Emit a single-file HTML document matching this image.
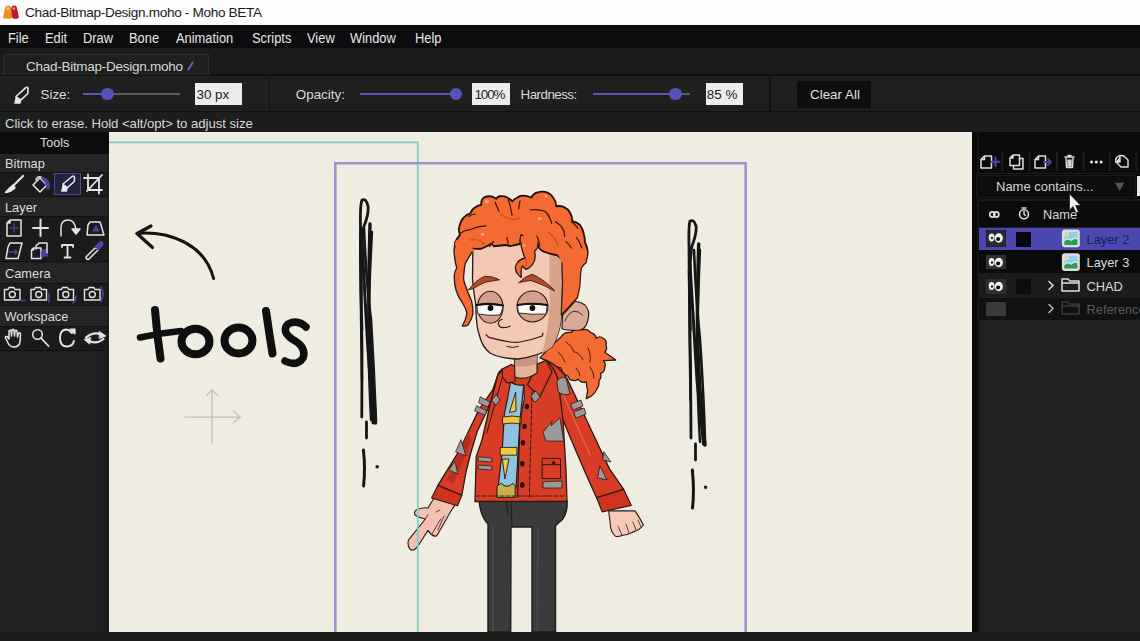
<!DOCTYPE html>
<html><head><meta charset="utf-8">
<style>
*{margin:0;padding:0;box-sizing:border-box}
html,body{width:1140px;height:641px;overflow:hidden;background:#1c1c1b;font-family:"Liberation Sans",sans-serif}
.a{position:absolute}
.t{position:absolute;white-space:nowrap;line-height:1}
#title{left:0;top:0;width:1140px;height:25px;background:#fcfcfc}
#menu{left:0;top:25px;width:1140px;height:23px;background:#0c0c0e}
#tabbar{left:0;top:48px;width:1140px;height:27px;background:#1b1b1b}
#tools{left:0;top:75px;width:1140px;height:37px;background:#1f1f1f;border-top:1px solid #121212}
#status{left:0;top:111px;width:1140px;height:21px;background:#1d1d1d;border-top:1px solid #111}
#lp{left:0;top:132px;width:109px;height:500px;background:#202021}
#canvas{left:109px;top:132px;width:863px;height:500px;background:#efece2;overflow:hidden}
#rp{left:972px;top:132px;width:168px;height:500px;background:#202020}
#bot{left:0;top:632px;width:1140px;height:9px;background:#1c1c1a}
.mi{color:#e6e6e6;font-size:14px;transform:scaleX(0.92);transform-origin:0 0}
.lt{color:#dcdcdc;font-size:13px}
</style></head><body>
<div id="title" class="a">
  <svg class="a" style="left:0;top:0" width="24" height="24" viewBox="0 0 24 24">
    <path d="M4.8 9 Q5.3 5.6 8 5.6 Q10.6 5.6 11.2 9 L12 17 Q12 18.8 10 18.8 L5 18.8 Q3 18.8 3.2 16.8 Z" fill="#f0901c"/>
    <path d="M11 9 Q11.5 5.6 14.2 5.6 Q16.8 5.6 17.2 9 L18.8 16.8 Q18.9 18.8 16.8 18.8 L14 18.8 Q12.2 18.8 12 17 Z" fill="#b81c2c"/>
    <circle cx="7.8" cy="8.6" r="1.3" fill="#f8c070"/>
    <circle cx="13.8" cy="8.6" r="1.3" fill="#f090a0"/>
  </svg>
  <div class="t" style="left:25px;top:5.5px;font-size:13.6px;letter-spacing:-0.33px;color:#1b1b1b">Chad-Bitmap-Design.moho - Moho BETA</div>
</div>
<div id="menu" class="a">
  <div class="t mi" style="left:8px;top:5.5px">File</div>
  <div class="t mi" style="left:45px;top:5.5px">Edit</div>
  <div class="t mi" style="left:83px;top:5.5px">Draw</div>
  <div class="t mi" style="left:129px;top:5.5px">Bone</div>
  <div class="t mi" style="left:176px;top:5.5px">Animation</div>
  <div class="t mi" style="left:252px;top:5.5px">Scripts</div>
  <div class="t mi" style="left:307px;top:5.5px">View</div>
  <div class="t mi" style="left:350px;top:5.5px">Window</div>
  <div class="t mi" style="left:415px;top:5.5px">Help</div>
</div>
<div id="tabbar" class="a">
  <div class="a" style="left:3px;top:6px;width:206px;height:21px;background:#1f1f1f;border:1px solid #2c2c2c;border-bottom:none"></div>
  <div class="a" style="left:209px;top:26px;width:931px;height:1px;background:#101010"></div>
  <div class="t" style="left:26px;top:11.5px;font-size:13.5px;letter-spacing:-0.27px;color:#d8d8d8">Chad-Bitmap-Design.moho</div>
  <svg class="a" style="left:186px;top:13px" width="9" height="10"><path d="M2 9 L7 1" stroke="#6a62c8" stroke-width="2"/></svg>
</div>
<div id="tools" class="a">
  <svg class="a" style="left:0;top:0" width="40" height="37" viewBox="0 75 40 37">
    <path d="M16 95.5 L25.5 86.8 Q27.5 85.3 28 87.5 L27.8 92.5 L21 98.8" fill="none" stroke="#e6e6e6" stroke-width="1.6" stroke-linejoin="round" stroke-linecap="round"/>
    <path d="M15.8 94.8 L21.5 98.5 L20.5 102.8 L14.2 102.8 Z" fill="#e6e6e6"/>
  </svg>
  <div class="t" style="left:40.5px;top:12px;font-size:13.4px;color:#dadada">Size:</div>
  <div class="a" style="left:83px;top:17px;width:24px;height:2px;background:#5a55b8"></div>
  <div class="a" style="left:107px;top:17px;width:73px;height:2px;background:#5c5c5c"></div>
  <div class="a" style="left:101px;top:11.5px;width:12.5px;height:12.5px;border-radius:50%;background:#5652b8"></div>
  <div class="a" style="left:195px;top:7px;width:47px;height:21.5px;background:#ececec"></div>
  <div class="t" style="left:196.5px;top:12px;font-size:13.4px;color:#222">30 px</div>
  <div class="a" style="left:268.6px;top:1px;width:1.5px;height:35px;background:#121212"></div>
  <div class="t" style="left:295.8px;top:12px;font-size:13.4px;color:#dadada">Opacity:</div>
  <div class="a" style="left:360px;top:17px;width:96px;height:2px;background:#5a55b8"></div>
  <div class="a" style="left:449.5px;top:11.5px;width:12.6px;height:12.6px;border-radius:50%;background:#5652b8"></div>
  <div class="a" style="left:472px;top:7.3px;width:37.6px;height:21.3px;background:#ececec"></div>
  <div class="t" style="left:474.5px;top:12px;font-size:13.4px;letter-spacing:-1.1px;color:#222">100%</div>
  <div class="t" style="left:520.6px;top:12px;font-size:13.4px;letter-spacing:-0.55px;color:#dadada">Hardness:</div>
  <div class="a" style="left:593px;top:17px;width:83px;height:2px;background:#5a55b8"></div>
  <div class="a" style="left:676px;top:17px;width:14px;height:2px;background:#5c5c5c"></div>
  <div class="a" style="left:669.4px;top:11.5px;width:12.6px;height:12.6px;border-radius:50%;background:#5652b8"></div>
  <div class="a" style="left:705.8px;top:7.3px;width:36.8px;height:21.3px;background:#ececec"></div>
  <div class="t" style="left:706.8px;top:12px;font-size:13.4px;color:#222">85 %</div>
  <div class="a" style="left:769px;top:1px;width:1.5px;height:35px;background:#121212"></div>
  <div class="a" style="left:797px;top:4.7px;width:73.5px;height:27.3px;background:#0e0e0e"></div>
  <div class="t" style="left:810px;top:12px;font-size:13.4px;color:#e0e0e0">Clear All</div>
</div>
<div id="status" class="a">
  <div class="t" style="left:5px;top:5px;font-size:13.2px;letter-spacing:-0.05px;color:#d8d8d8">Click to erase. Hold &lt;alt/opt&gt; to adjust size</div>
</div>
<div id="lp" class="a">
  <div class="a" style="left:0;top:0;width:109px;height:21.5px;background:#0c0c0c"></div>
  <div class="t" style="left:40px;top:5px;font-size:12.5px;color:#e0e0d8">Tools</div>
  <div class="a" style="left:0;top:21.5px;width:108px;height:18.5px;background:#252525"></div>
  <div class="t" style="left:5px;top:26.3px;font-size:12.8px;color:#dcdcdc">Bitmap</div>
  <div class="a" style="left:0;top:40px;width:108px;height:24.5px;background:#1b1b1b;border-top:1px solid #111;border-bottom:1px solid #111"></div>
  <div class="a" style="left:54px;top:41.3px;width:27px;height:22.2px;background:#23233a;border:1px solid #4a46a8"></div>
  <div class="a" style="left:0;top:64.5px;width:108px;height:19px;background:#252525"></div>
  <div class="t" style="left:5px;top:69.6px;font-size:12.8px;color:#dcdcdc">Layer</div>
  <div class="a" style="left:0;top:84px;width:108px;height:46px;background:#1b1b1b;border-top:1px solid #111;border-bottom:1px solid #111"></div>
  <div class="a" style="left:0;top:130.5px;width:108px;height:20.5px;background:#252525"></div>
  <div class="t" style="left:5px;top:136.3px;font-size:12.8px;color:#dcdcdc">Camera</div>
  <div class="a" style="left:0;top:151px;width:108px;height:23px;background:#1b1b1b;border-top:1px solid #111;border-bottom:1px solid #111"></div>
  <div class="a" style="left:0;top:174px;width:108px;height:19.5px;background:#252525"></div>
  <div class="t" style="left:4.5px;top:178.8px;font-size:12.8px;color:#dcdcdc">Workspace</div>
  <div class="a" style="left:0;top:193.5px;width:108px;height:25px;background:#1b1b1b;border-top:1px solid #111;border-bottom:1px solid #111"></div>
  <div class="a" style="left:103px;top:219px;width:6px;height:281px;background:#1c1c1c"></div>
  <svg class="a" style="left:0;top:0" width="109" height="230" viewBox="0 132 109 230" fill="none" stroke="#e4e4e4" stroke-width="1.5" stroke-linejoin="round" stroke-linecap="round">
    <!-- brush -->
    <path d="M23 176 L13 186" stroke-width="2.2"/>
    <path d="M13 185 Q9 188 5.5 192.5 Q11 192 15 188Z" fill="#e4e4e4"/>
    <!-- bucket -->
    <path d="M33 185 L40 178 L47 185 L40 192Z"/>
    <path d="M36 180 Q37 176 41 177"/>
    <path d="M42 176.5 Q49.5 178 50 186.5 Q50 189.5 48 189.5 Q46 189.5 46.2 186.5 Q46 182 42 180Z" fill="#4a44a8" stroke="none"/>
    <!-- eraser -->
    <path d="M63 184 L72 176.5 Q74 175.3 74.5 177.3 L74.3 181.5 L67.5 187.5" fill="none" stroke="#e8e8f4" stroke-width="1.5"/>
    <path d="M62.8 183.5 L68 187 L67 191.8 L61 191.8Z" fill="#e8e8f4" stroke="none"/>
    <!-- crop -->
    <path d="M88 174.5 L88 190 L102 190 M84 178 L99 178 L99 193.5 M87 191 L102 175" stroke-width="1.8"/>
    <!-- layer row1 -->
    <path d="M10 220 L21 220 L21 236 L7 236 L7 223 Z M7 223 L10 223 L10 220"/>
    <path d="M14 224 L14 232 M10 228 L18 228" stroke="#4a44a8" stroke-width="1.8" opacity="0.7"/>
    <path d="M40.5 219.5 L40.5 236 M33 228 L48 228" stroke-width="2"/>
    <path d="M61 236 L61 228 Q61 220 68 220 Q75 220 76 230"/>
    <path d="M72 229 L80 229 L76 234Z" fill="#e4e4e4"/>
    <path d="M90 222 L100 222 L104 235 L87 235 L88 225Z"/>
    <path d="M96 226 L99 231 L93 231Z" fill="#4a44a8" stroke="#4a44a8" stroke-width="1"/>
    <!-- layer row2 -->
    <path d="M10 243 L22 243 L18 258.5 L6 258.5 L8 247 Z"/>
    <path d="M9 252 L17 252 M15 250 L17 252 L15 254" stroke="#4a44a8" stroke-width="1.6"/>
    <path d="M39 243 L47 243 L47 253 L43 253 M36 246 L36 249 M39 243 L36 246 L36 249"/><path d="M33.5 248 L41 248 L41 258.5 L31.5 258.5 L31.5 250 Z M31.5 250 L33.5 250 L33.5 248"/>
    <path d="M42 251 L45 249 L46 253 L48 256 L44 256 L42 258 L41.5 254 Z" fill="#4a44a8" stroke="#4a44a8" stroke-width="1"/>
    <path d="M62 245 L73 245 M67.5 245 L67.5 257.5 M64.5 257.5 L70.5 257.5 M62 245 L62 247 M73 245 L73 247" stroke-width="1.8"/>
    <path d="M86 257 L96 247 L98.5 249.5 L88.5 259.5 Q86 259.5 86 257Z"/>
    <path d="M96 247 L101 242 Q103 243 102 245 L98 249" stroke="#4a44a8" stroke-width="2.5" fill="#4a44a8"/>
    <!-- camera row -->
    <g stroke-width="1.4">
      <path d="M4.5 289.5 L8 289.5 L9 287.5 L14 287.5 L15 289.5 L20 289.5 L20 300 L4.5 300 Z"/><circle cx="12.3" cy="294.5" r="3"/>
      <path d="M31 289.5 L34.5 289.5 L35.5 287.5 L40.5 287.5 L41.5 289.5 L46.5 289.5 L46.5 300 L31 300 Z"/><circle cx="38.8" cy="294.5" r="3"/>
      <path d="M58 289.5 L61.5 289.5 L62.5 287.5 L67.5 287.5 L68.5 289.5 L73.5 289.5 L73.5 300 L58 300 Z"/><circle cx="65.8" cy="294.5" r="3"/>
      <path d="M84.5 289.5 L88 289.5 L89 287.5 L94 287.5 L95 289.5 L100 289.5 L100 300 L84.5 300 Z"/><circle cx="92.3" cy="294.5" r="3"/>
    </g>
    <g stroke="#4a44a8" stroke-width="1.6">
      <path d="M20 300.5 L25 300.5"/>
      <path d="M49 294 L49 302"/>
      <path d="M76 296 Q76 301 73 303"/>
      <path d="M101 287 Q105 294 101 302"/>
    </g>
    <!-- workspace -->
    <path d="M8 343 L5.5 338 Q5 336 7 336.5 L9 339 L9 331 Q10 329.5 11 331 L11.5 336 L12 330 Q13 328.5 14 330 L14.5 336 L15 331 Q16 329.5 17 331 L17.5 337 L18.5 333 Q20 332 20.5 334 L20 342 Q19 347 14 347 Q10 347 8 343Z"/>
    <circle cx="37.5" cy="334.5" r="4.8"/><path d="M41 338 L48.5 346" stroke-width="1.8"/>
    <path d="M72 333 Q69 329.5 66 329.5 Q60 330 60 338 Q60 346.5 67 346.5 Q72.5 346.5 74 341" stroke-width="2"/>
    <path d="M70 329 L75 329 L75 334Z" fill="#e4e4e4" stroke-width="1.2"/>
    <path d="M86 337.5 Q93 331 102 334.5 M103.5 339 Q96 345 88 340.5" stroke-width="2.2"/>
    <path d="M99.5 331.5 L106 336 L99.5 338.5Z M90.5 337.5 L84 339.5 L89.5 344Z" fill="#e4e4e4" stroke-width="0.8"/>
  </svg>
</div>
<div id="canvas" class="a">
<svg class="a" style="left:0;top:0" width="863" height="500" viewBox="109 132 863 500">
  <!-- crosshair -->
  <g fill="none" stroke="#c9bdb5" stroke-width="1.3" stroke-linecap="round">
    <path d="M184.8 417.1 L240.3 417.1 M233.4 411.1 L240.3 417.1 L233.4 422.6"/>
    <path d="M212.1 389.8 L212.1 444.2 M206.7 395.3 L212.1 389.8 L217.6 395.3"/>
  </g>
  <!-- arrow -->
  <g fill="none" stroke="#141414" stroke-linecap="round" stroke-linejoin="round">
    <path d="M213.6 278.5 Q205 245 165 235 Q150 232 137 233.5" stroke-width="3"/>
    <path d="M151 226 L137 233.5 L152.5 247.5" stroke-width="3.2"/>
  </g>
  <!-- tools -->
  <g fill="none" stroke="#0f0f0f" stroke-linecap="round" stroke-linejoin="round">
    <path d="M155 310 Q157 335 160.5 358.5" stroke-width="8"/>
    <path d="M140 337.5 Q160 333 181 331" stroke-width="6.5"/>
    <ellipse cx="195.5" cy="341.5" rx="14" ry="12.8" stroke-width="8"/>
    <ellipse cx="238.5" cy="340.5" rx="14" ry="13" stroke-width="8"/>
    <path d="M266 311 Q269 332 272.5 353.5" stroke-width="8"/>
    <path d="M306 327 Q298 319 288 324 Q281 331 292 339 Q307 347 303 358 Q297 367 285 361" stroke-width="7.5"/>
  </g>
  <!-- scribbles -->
  <g fill="none" stroke="#161616" stroke-linecap="round" stroke-linejoin="round">
    <path d="M362 330 Q360 270 360.5 225 Q360 205 362 200 Q366 198 368 206 Q369 214 364 226 Q362 232 361.5 250 Q361 300 362 350 L361.8 417" stroke-width="2.8"/>
    <path d="M370 224 Q368.5 280 369 320 Q371 370 374 400 L375.5 423" stroke-width="3.4"/>
    <path d="M362 240 Q365 300 368 350 Q371 390 373 423" stroke-width="3"/>
    <path d="M366.5 422 L366.5 438" stroke-width="2.8"/>
    <path d="M363.4 450 Q365.5 468 363.6 486" stroke-width="3"/>
    <circle cx="377.2" cy="466.7" r="0.8" stroke-width="2"/>
    <path d="M690.5 330 Q689 280 689 245 Q688.5 226 690 221 Q694 219 696 226 Q697 233 692 246 Q690.5 254 690 270 Q689.5 320 690.5 360 L691 438" stroke-width="2.8"/>
    <path d="M698.7 244 Q697 300 697.5 340 Q700 400 703 425 L705 445" stroke-width="3.4"/>
    <path d="M690 265 Q694 330 697 380 Q701 420 703.5 444" stroke-width="3"/>
    <path d="M695.5 444 L695.5 460" stroke-width="2.8"/>
    <path d="M692.3 470 Q694.5 490 692.5 508" stroke-width="3"/>
    <circle cx="705.6" cy="487.2" r="0.8" stroke-width="2"/>
  <path d="M364 228 Q366 280 371 320 Q374 370 376 421" stroke-width="2.6"/>
    <path d="M372 232 Q369 290 368 330 Q369 380 371 420" stroke-width="2.4"/>
    <path d="M360.5 255 Q361 330 362 380" stroke-width="2.4"/>
    <path d="M694 250 Q696 300 700 340 Q704 400 705 443" stroke-width="2.6"/>
    <path d="M700 250 Q697 320 697 360 Q698 410 700 442" stroke-width="2.4"/>
    <path d="M689 270 Q689.5 340 690.5 400" stroke-width="2.4"/>
  </g>
  <!-- CHARACTER -->
  <g id="char" stroke="#2a1a14" stroke-linejoin="round" stroke-linecap="round">
    <!-- ponytail -->
    <path d="M540.0 357.9 Q549.5 346.3 561.0 336.9 Q564.4 331.3 570.9 332.6 Q575.4 326.7 582.1 329.8 Q587.3 328.2 590.6 332.6 Q595.4 333.5 596.2 338.3 Q599.7 335.5 603.2 338.3 Q607.4 340.7 606.0 345.3 Q607.8 349.3 604.6 352.3 Q610.2 356.1 615.8 360.0 Q609.5 360.4 603.2 360.7 Q606.4 363.7 604.6 367.8 Q604.8 372.3 600.4 373.4 Q602.2 377.4 599.0 380.4 Q599.6 385.9 596.2 390.2 Q592.9 396.4 586.3 398.6 Q587.0 394.4 587.8 390.2 Q586.2 386.1 586.3 381.8 Q581.0 383.7 578.0 379.0 Q576.4 381.4 573.7 380.4 Q569.2 380.6 568.0 376.2 Q562.0 374.1 561.0 367.8 Q554.3 367.2 549.8 362.1 Q544.9 360.0 540.0 357.9Z" fill="#f36a32" stroke-width="1.3"/>
    <path d="M566 342 Q572 346 574 352 M575 352 Q581 354 583 360 M588 348 Q591 354 590 362 M558 352 Q563 356 565 362 M590 367 Q594 372 594 378 M576 368 Q580 372 580 376" fill="none" stroke="#4a1a0a" stroke-width="1"/>
    <!-- pants -->
    <path d="M479 501 L567 501 Q568 512 562 520 Q557 524 555.5 526 L555.5 632 L532 632 L532 527 L511 527 L510.7 632 L488 632 L488 524 Q480 516 479 499Z" fill="#3b3b3b" stroke="#1c1c1c" stroke-width="1.4"/>
    <path d="M511 503 L512 525 M506 500 L508 515" fill="none" stroke="#1c1c1c" stroke-width="1.1"/>
    <path d="M493 527 L493 630 M538 528 L537 630" fill="none" stroke="#474747" stroke-width="2"/>
    <!-- hands -->
    <path d="M434 498 L456 502 Q455 506 452 509.3 L440.7 529 Q438 534 436.5 536 Q432 537 428 530.4 L418.2 545.8 Q414 551 411.2 550 Q407 547 408.4 540.2 L425.3 519 Q420 518 416.8 516.3 Q413 514 415.4 510.7 Q420 507 428 508 Z" fill="#f4c0b2" stroke-width="1.1"/>
    <path d="M428 514.9 L425.3 519 M440.7 519 L432 534 M444 516 L438 530 M436 512 L440 510" fill="none" stroke="#3a2018" stroke-width="0.8"/>
    <path d="M608.7 510.9 L635 510.9 Q640 518 643.4 525 Q640 530 632.1 532.4 Q627 535 622.8 535.2 Q618 537 615.3 536.2 Q611 532 610.6 526.8 Z" fill="#f5c8b8" stroke-width="1.1"/>
    <path d="M618 526 L622 535 M626 524 L629 533 M633 522 L636 530 M638 520 L641 527" fill="none" stroke="#3a2018" stroke-width="0.8"/>
    <!-- jacket: left arm -->
    <path d="M502.4 369 Q498 372 497.7 375.3 L493 389.3 L479 409.6 L458.7 451.7 L437.9 485.4 L461.8 495.3 L466 472 L470.5 454 L477 432 L492 400 L505 385Z" fill="#d83c24" stroke-width="1.3"/>
    <!-- right arm -->
    <path d="M546 360.3 Q560 366 567.2 378.9 L588.4 424 L609.6 469.1 L623.7 489.4 L596.6 497.8 L585 472 L573 444 L563 420 L552 395Z" fill="#d83c24" stroke-width="1.3"/>
    <!-- torso -->
    <path d="M502.4 369 Q508 366 515 366 L536 365 Q542 362 546 360.3 Q555 368 558 380 L563 420 L566 470 L567 501.5 L475 501.5 L476.2 456.8 L482 440 L490 405 L497.7 375.3Z" fill="#d83c24" stroke-width="1.3"/>
    <!-- arm shading -->
    <path d="M468 432 L447 480 L453 484 L472 440Z" fill="#b8301c" stroke="none"/>
        <path d="M562 392 L590 455" fill="none" stroke="#f07a5a" stroke-width="1.2" opacity="0.7"/>
    <!-- cuffs -->
    <path d="M437.9 485.4 L461.8 495.3 L457.5 505.8 L431.6 498Z" fill="#d03420" stroke-width="1.2"/>
    <path d="M596.6 497.8 L623.7 489.4 L631.2 505.3 L602.2 511.8Z" fill="#d03420" stroke-width="1.2"/>
    <!-- shirt -->
    <path d="M510.6 382 Q516 386 523.75 385 L524.4 398.75 L520 420 L516 488 L498 488 L502 453 L504.4 413.75 L507.5 398.75Z" fill="#8fc3e0" stroke-width="1.2"/>
    <path d="M515.6 392.5 L509.4 412.5 L515.6 411.25Z" fill="#f2c83a" stroke-width="0.9"/>
    <path d="M502.8 459 L509 459 L505 478.6Z" fill="#f2c83a" stroke-width="0.9"/>
    <path d="M503 417 Q512 415 521.5 417 L521 424 Q512 422 502.8 424Z" fill="#f2c83a" stroke-width="0.9"/>
    <path d="M500.6 447.4 L517 447.4 L516.8 455.2 L500.4 455.2Z" fill="#f2c83a" stroke-width="0.9"/>
    <path d="M497.3 486 L501 483.3 L505 486 L509 486 L513 483.3 L515.2 486 L515.2 497.4 L497.3 497.4Z" fill="#c8b050" stroke-width="1"/>
    <!-- placket lines / buttons -->
    <path d="M523.75 385 L520 420 L517.6 497" fill="none" stroke-width="1.2"/>
    <path d="M532 392 L529.3 497" fill="none" stroke-width="1" stroke-dasharray="4 2"/>
    <path d="M476 496 L566 496" fill="none" stroke-width="0.9" stroke-dasharray="4 2"/>
    <g fill="#1c1010" stroke="none">
      <ellipse cx="527" cy="406.5" rx="2.2" ry="2.8"/><ellipse cx="524.5" cy="426.5" rx="2.2" ry="2.8"/><ellipse cx="523" cy="442.8" rx="2.2" ry="2.8"/><ellipse cx="522.3" cy="463.8" rx="2.2" ry="2.8"/><ellipse cx="522.3" cy="484.9" rx="2.2" ry="2.8"/>
    </g>
    <!-- collar -->
    <path d="M502.4 369 L511.8 364.4 L515.7 367.5 L514.9 381.5 L507 383 L502.4 376.8Z" fill="#d83c24" stroke-width="1.2"/>
    <path d="M536 365 L546 360.3 L552 372 L539.8 397 L527.4 384.6 L534 372Z" fill="#d83c24" stroke-width="1.2"/>
    <path d="M502.4 376.8 L486.8 433" fill="none" stroke-width="1"/>
    
    <!-- pocket -->
    <path d="M542.5 458.4 L560.5 458.4 L560.5 478.6 L542.5 478.6Z M542.5 464.6 L560.5 464.6" fill="none" stroke-width="1"/>
    <circle cx="553.5" cy="463" r="1.4" fill="#1c1010"/>
    <!-- gray patches -->
    <g fill="#9a9a9c" stroke="#2a1a14" stroke-width="0.8">
      <path d="M557 381 Q561 376 566 378 L570 394 Q563 396 558.5 392Z"/>
      <path d="M571 404 L581 400 L583 406 L573 410Z M574 412 L584 408 L586 414 L576 418Z"/>
      <path d="M543.3 432 L552 421 L551 426 L560 417.8 L563.6 441.2 L546 441Z"/>
      <path d="M543.3 481.8 L562 481 L562 488 L543.3 488Z"/>
      <path d="M531 396 L536 391 L540 397 L535 402Z"/>
      <path d="M492 400 L496 394.5 L500 400 L496 405Z"/>
      <path d="M480.6 397 L490 402 L488 407 L479 403Z M477 406 L487 411 L485 415 L475 411Z"/>
      <path d="M478.6 456.8 L491.8 458 L491.8 462 L478.6 461Z M478.6 465 L491.8 466 L491.8 470 L478.6 469Z"/>
      <path d="M461 440 L466 456 L456 452Z M455 462 L458 474 L449 470Z"/>
      <path d="M600 466 L607 480 L598 478Z M604 452 L611 462 L603 460Z"/>
    </g>
    <!-- neck -->
    <path d="M514 350 L515 377 Q525 381 537 373 L537 350Z" fill="#e6b29b" stroke-width="1.1"/><path d="M514.5 352 L515 366 Q526 368 536.5 364 L537 352Z" fill="#c99582" stroke="none"/>
    <!-- face -->
    <path d="M473 232 L472.5 279 Q474 295 475.5 302.5 Q476 312 476.5 320 Q477.5 330 479 334 Q482 347 490 353 Q500 358.5 518 359 Q540 356 552 347 Q559 336 561 320 L563 232Z" fill="#f3c8b4" stroke-width="1.3"/>
    <path d="M549.5 250 L563 250 L561 320 Q559 336 552 347 Q547 351 542 353 Q548 335 549.5 305Z" fill="#d9a28b" stroke="none"/>
    <!-- ear -->
    <path d="M562.5 315 L575 301.25 Q581 302 585 305 Q589 310 588.75 315 Q588 321 586.25 325 Q584 329 580 330 Q570 331 562 329Z" fill="#dcab98" stroke-width="1.2"/>
    <path d="M565 321 Q568 313 573.75 311.25 Q579 311 582.5 315" fill="none" stroke-width="0.9"/>
    <!-- hair main -->
    <path d="M456 260 Q454 250 455 242.5 Q457 238 460 235 Q458 230 459.4 226.25 Q461 220 463.75 217.5 Q467 214 470 213.75 Q472 209 475 207.5 Q478 205 481.25 205 Q481 201 482.5 198.75 Q485 196 488.75 196.25 Q493 196 496.25 198.75 Q498 196 500 196.25 Q504 196 507.5 197.5 Q510 199 512.5 201.25 Q514 199 517.5 197.5 Q520 195.5 522.5 195.6 Q527 195.5 531.25 197.5 Q534 193 537.5 192.5 Q541 191 545 191.9 Q550 193 553.1 197.5 Q556 201 556.25 206.25 Q560 205.5 563.75 206.9 Q568 209 570 212.5 Q572 216 572.5 221.25 Q577 222 580 225 Q583 229 583.75 233.75 Q585 238 585 242.5 Q587 246 587.5 250 Q588 255 586.25 260 Q575 259 562.5 260 Q559 256 556.25 255 Q550 254 546.25 252.5 Q541 251 538.75 247.5 Q537 242 536.25 236.25 L530 240 Q526 238 521.25 235 Q520 240 520 244 Q515 245 510 246.25 Q507 245 505 245 Q499 246 493.75 246.25 Q492 244 491.25 243.75 Q486 247 481.25 248.75 Q477 249 472.5 248.75 Q468 250 463 255Z" fill="#f36a32" stroke-width="1.8" stroke="#26100a"/>
    <!-- forehead curl -->
    <path d="M521 236 Q520 243 521.8 248.2 Q523 254 525 258 Q520 259 517.5 262.5 Q514.5 267 515.6 268.75 Q515.5 272 517.5 273.75 Q519 276 521.25 277.5 Q521 273 521.25 270 Q521.5 267 522.5 266 Q524 268 526.25 269.4 Q530 268 532.5 264.4 Q535 261 535 257.5 Q535.5 254 534.5 251.7 Q538 248 538 235.5Z" fill="#f36a32" stroke="none"/><path d="M521 243 Q521 246 521.8 248.2 Q523 254 525 258 Q520 259 517.5 262.5 Q514.5 267 515.6 268.75 Q515.5 272 517.5 273.75 Q519 276 521.25 277.5 Q521 273 521.25 270 Q521.5 267 522.5 266 Q524 268 526.25 269.4 Q530 268 532.5 264.4 Q535 261 535 257.5 Q535.5 254 534.5 251.7 Q537.5 249 538 245" fill="none" stroke-width="1.3"/>
    <path d="M525 258 Q528 262 526 266" fill="none" stroke="#b84a20" stroke-width="0.8"/>
    <!-- left hair strand -->
    <path d="M456 240 Q453 248 454.4 255.6 Q455 262 456.7 268 Q454 272 454.4 276 Q454 284 456 290 Q458 297 462.2 302.5 Q466 308 466.9 313.4 Q466 320 462.2 326 Q466 326.5 468.4 324.4 Q472 319 473 313.4 Q473 307 471.6 301 Q468 293 465.3 285.3 Q463 280 463.75 276 Q464 269 465.3 263.4 Q470 256 474.7 249.4Z" fill="#f36a32" stroke="none"/>
    <path d="M455 246 Q453.5 250 454.4 255.6 Q455 262 456.7 268 Q454 272 454.4 276 Q454 284 456 290 Q458 297 462.2 302.5 Q466 308 466.9 313.4 Q466 320 462.2 326 Q466 326.5 468.4 324.4 Q472 319 473 313.4 Q473 307 471.6 301 Q468 293 465.3 285.3 Q463 280 463.75 276 Q464 269 465.3 263.4 Q469 257 472 252" fill="none" stroke-width="1.3"/>
    <!-- right hair strand -->
    <path d="M556 250 L587 250 Q587.5 256 586.25 262.5 Q582 266 581.25 268.75 Q580 278 580 285 Q579 292 577.5 297.5 Q570 306 561.25 315 Q561.5 307 561.9 300 Q562.5 290 562.5 281 Q562 272 561.9 262.5Z" fill="#f36a32" stroke="none"/>
    <path d="M586.8 258 Q586.5 260 586.25 262.5 Q582 266 581.25 268.75 Q580 278 580 285 Q579 292 577.5 297.5 Q570 306 561.25 315 Q561.5 307 561.9 300 Q562.5 290 562.5 281 Q562 272 561.9 262.5" fill="none" stroke-width="1.2"/>
    <!-- hair details -->
    <g fill="none" stroke="#3a1408" stroke-width="1.2">
      <path d="M459.5 233.7 Q465 230 470 229.7 Q478 226 485.8 225.8"/>
      <path d="M468.7 216.6 Q472 214 475.3 214"/>
      <path d="M489.7 246.8 Q491 243 493.7 241.6"/>
      <path d="M495 202 Q497 207 499 211.3"/>
      <path d="M508.2 199.5 Q511 207 512 215.3"/>
      <path d="M520 200.8 Q519 205 518.7 208.7"/>
      <path d="M530.5 210 Q538 209 545 211.3 Q549 215 550.3 219.2 L551.6 223.2"/>
      <path d="M555.5 221.8 Q561 225 563.4 229.7 Q564.5 233 564.7 236.3"/>
      <path d="M566 241.6 Q569 244 571.3 248"/>
      <path d="M571.3 221.8 Q575 224 578 228.4"/>
      <path d="M576.6 237.6 Q580 242 581.8 248"/>
      <path d="M537 236.3 Q539 240 539.7 245.5"/>
      <path d="M506.8 237.6 Q508 241 508.2 244.2"/>
    </g>
    <g fill="none" stroke="#c84a1c" stroke-width="1.6" opacity="0.7">
      <path d="M500 214 Q510 222 520 218 M470 240 Q478 238 484 244 M548 232 Q556 238 558 246"/>
    </g>
    <g fill="#ffa27a" stroke="none">
      <ellipse cx="487" cy="201.4" rx="2.2" ry="1.8"/><ellipse cx="539.7" cy="218.6" rx="2" ry="1.7"/><ellipse cx="482.5" cy="234.3" rx="1.8" ry="1.5"/><ellipse cx="524" cy="245.5" rx="1.4" ry="1.6"/><ellipse cx="546" cy="196" rx="1.4" ry="1.2"/>
    </g>
    <!-- eyebrows -->
    <path d="M468.5 289.7 Q476 280 484.7 276.3 Q493 276 499.4 279.8 Q492 281 486 282 Q479 285 473.4 288.3Z" fill="#b44a26" stroke="#3a1a10" stroke-width="0.9"/>
    <path d="M519 282.6 Q525 276 532.4 274.2 Q545 280 554.9 291 Q542 284 531 280.5 Q525 281 519 282.6Z" fill="#b44a26" stroke="#3a1a10" stroke-width="0.9"/>
    <!-- eye sockets -->
    <ellipse cx="490.3" cy="307.2" rx="12.7" ry="16" fill="#d4a08c" stroke-width="1.1"/>
    <ellipse cx="532.5" cy="306.5" rx="15.5" ry="15.5" fill="#d4a08c" stroke-width="1.1"/>
    <!-- whites -->
    <path d="M477 305 Q490 303 503 305.5 Q502 312 500 315 Q490 316 478 314 Q477 310 477 305Z" fill="#f8f8f6" stroke-width="0.9"/>
    <path d="M517.7 305 Q532 303 547 305 Q547 310 546 314 Q532 315 518.5 313 Q517.5 309 517.7 305Z" fill="#f8f8f6" stroke-width="0.9"/>
    <path d="M477 305 Q490 302.5 503 305.5 M517.7 305 Q532 302.5 547 305" fill="none" stroke="#1a1010" stroke-width="2.2"/>
    <circle cx="490.5" cy="308" r="2.9" fill="#111" stroke="none"/>
    <circle cx="532.4" cy="308" r="2.9" fill="#111" stroke="none"/>
    <!-- nose & mouth -->
    <path d="M502.2 319.2 Q497 321 498.7 324.8 Q500 328 503.6 327.6 Q508 327.5 510 326.2" fill="none" stroke-width="1.1"/>
    <path d="M486 334.6 L488.9 337.4 Q500 340.5 510 342 Q516 342.8 520 342 Q532 340 542.2 336 L543 333" fill="none" stroke-width="1.2"/>
    <path d="M507 346.5 Q513 348.5 518.4 346.5" fill="none" stroke-width="1"/>
  </g>
<!-- guides -->
  <path d="M109 142.3 L417.8 142.3 L417.8 632" fill="none" stroke="#7ccdc2" stroke-width="1.7"/>
  <path d="M335.3 632 L335.3 163.2 L745.7 163.2 L745.7 632" fill="none" stroke="#9c94d0" stroke-width="2.6"/>
  </svg>
</div>
<div id="rp" class="a" style="background:#1f201f">
  <div class="a" style="left:0;top:0;width:168px;height:95px;background:#0b0b0b"></div>
  <div class="a" style="left:0;top:0;width:5px;height:500px;background:#0a0a09"></div>
  <div class="a" style="left:5px;top:0;width:1.5px;height:500px;background:#151515"></div>
  <div class="a" style="left:7px;top:40.5px;width:161px;height:1.5px;background:#1c1c1c"></div>
  <div class="a" style="left:4px;top:43px;width:160px;height:22.5px;background:#0d0d0d;border:1px solid #191919"></div>
  <div class="a" style="left:164.5px;top:43.6px;width:4px;height:20.6px;background:#e8e8e8"></div>
  <div class="a" style="left:7px;top:67px;width:161px;height:1.5px;background:#1a1a1a"></div>
  <div class="t" style="left:24px;top:48.3px;font-size:13px;color:#d4d4d0">Name contains...</div>
  <div class="t" style="left:71px;top:76.5px;font-size:12.8px;color:#d8d8d0">Name</div>
  <div class="a" style="left:6.6px;top:95.5px;width:162px;height:22.5px;background:#4a48ae"></div>
  <div class="a" style="left:6.6px;top:118px;width:162px;height:23px;background:#0b0b0b"></div>
  <div class="a" style="left:6.6px;top:141px;width:162px;height:25px;background:#1c1c1c"></div>
  <div class="a" style="left:6.6px;top:166px;width:162px;height:22.3px;background:#111"></div>
  <div class="a" style="left:14.3px;top:98px;width:20.2px;height:16.7px;background:#2c2c30;border:1px solid #20203a"></div>
  <div class="a" style="left:44.4px;top:100px;width:14.6px;height:14.7px;background:#08080c"></div>
  <div class="a" style="left:14.3px;top:122.7px;width:20.2px;height:14.6px;background:#303030"></div>
  <div class="a" style="left:14.3px;top:146.5px;width:20.2px;height:15px;background:#303030"></div>
  <div class="a" style="left:44.4px;top:147px;width:14.6px;height:14.7px;background:#0c0c0c"></div>
  <div class="a" style="left:14.3px;top:169.5px;width:20.2px;height:14.5px;background:#3a3a3a"></div>
  <div class="t" style="left:114.6px;top:101.5px;font-size:12.8px;color:#1c1c5a">Layer 2</div>
  <div class="t" style="left:114.6px;top:124.8px;font-size:12.8px;color:#dcdcdc">Layer 3</div>
  <div class="t" style="left:114.6px;top:148.5px;font-size:12.8px;color:#dcdcdc">CHAD</div>
  <div class="t" style="left:114.6px;top:171.5px;font-size:12.8px;color:#5a5a5a">Reference</div>
  <svg class="a" style="left:0;top:0" width="168" height="200" viewBox="972 132 168 200" fill="none" stroke="#dedede" stroke-width="1.4" stroke-linejoin="round" stroke-linecap="round">
    <g fill="#1e1e1e" stroke="none">
      <rect x="1001.5" y="152" width="1.8" height="19"/><rect x="1028.5" y="152" width="1.8" height="19"/><rect x="1056" y="152" width="1.8" height="19"/>
      <rect x="1082.5" y="152" width="1.8" height="19"/><rect x="1109" y="152" width="1.8" height="19"/><rect x="1135.5" y="152" width="1.8" height="19"/>
    </g>
    <!-- new layer + -->
    <path d="M984.5 156 L991.5 156 L991.5 168 L981 168 L981 159.5 Z M981 159.5 L984.5 159.5 L984.5 156" stroke-width="1.5"/>
    <path d="M995.5 157.5 L995.5 166 M991.5 161.8 L999.5 161.8" stroke="#4a44a8" stroke-width="2.2"/>
    <!-- duplicate -->
    <path d="M1013 155 L1019.5 155 L1019.5 165.5 L1010 165.5 L1010 158 Z M1010 158 L1013 158 L1013 155 M1019.5 158.5 L1023 158.5 L1023 169 L1013.5 169 L1013.5 165.5" stroke-width="1.5"/>
    <!-- new + arrow -->
    <path d="M1038.5 156 L1045.5 156 L1045.5 168 L1035 168 L1035 159.5 Z M1035 159.5 L1038.5 159.5 L1038.5 156" stroke-width="1.5"/>
    <path d="M1044 162 L1051 162 M1048 159 L1051 162 L1048 165" stroke="#4a44a8" stroke-width="1.8"/>
    <!-- trash -->
    <path d="M1065 157 L1074 157 M1068 155.5 L1071 155.5 M1066 158.5 L1066.5 167.5 L1072.5 167.5 L1073 158.5 M1068 160 L1068 166 M1069.5 160 L1069.5 166 M1071 160 L1071 166"/>
    <g fill="#e8e8e8" stroke="none"><circle cx="1091.5" cy="162" r="1.5"/><circle cx="1096.3" cy="162" r="1.5"/><circle cx="1101.1" cy="162" r="1.5"/></g>
    <!-- overlap -->
    <path d="M1117 157 Q1120 154.5 1124 156 L1128 160 L1128 167 L1121 167 L1116 162 Q1115 159 1117 157Z"/>
    <path d="M1120 156 L1120 162 L1116 162" fill="#dedede"/>
    <!-- dropdown triangle -->
    <path d="M1115 182.8 L1124.3 182.8 L1119.6 191Z" fill="#555" stroke="none"/>
    <!-- header icons -->
    <g stroke-width="1.6"><circle cx="992.3" cy="214.5" r="2.6"/><circle cx="996.3" cy="214.5" r="2.6"/></g>
    <circle cx="1024" cy="214.3" r="4.5" stroke-width="1.6"/><path d="M1022 208 L1026 208 M1024 211.5 L1024 214.3 L1025.5 215.5" stroke-width="1.4"/>
    <g transform="translate(986.5,230.0)" stroke="none"><ellipse cx="5.1" cy="7.5" rx="2.9" ry="3.9" fill="#f0f0f0"/><ellipse cx="12.3" cy="8" rx="4.1" ry="4.7" fill="#f0f0f0"/><circle cx="5.5" cy="8" r="1.2" fill="#222"/><circle cx="11.6" cy="9" r="2" fill="#080808"/></g><g transform="translate(986.5,254.5)" stroke="none"><ellipse cx="5.1" cy="7.5" rx="2.9" ry="3.9" fill="#f0f0f0"/><ellipse cx="12.3" cy="8" rx="4.1" ry="4.7" fill="#f0f0f0"/><circle cx="5.5" cy="8" r="1.2" fill="#222"/><circle cx="11.6" cy="9" r="2" fill="#080808"/></g><g transform="translate(986.5,278.5)" stroke="none"><ellipse cx="5.1" cy="7.5" rx="2.9" ry="3.9" fill="#f0f0f0"/><ellipse cx="12.3" cy="8" rx="4.1" ry="4.7" fill="#f0f0f0"/><circle cx="5.5" cy="8" r="1.2" fill="#222"/><circle cx="11.6" cy="9" r="2" fill="#080808"/></g>
    <g transform="translate(1062.6,230.3)"><rect x="0" y="0" width="16.5" height="16.3" rx="2" fill="#cfe8f0"/><rect x="1" y="1" width="14.5" height="14.3" fill="#8fd0e8"/><circle cx="3.5" cy="3.5" r="2" fill="#f0d040"/><path d="M1 11 Q5 7 8.5 10 Q12 6.5 15.5 9 L15.5 15.3 L1 15.3Z" fill="#2a9a5a"/></g><g transform="translate(1062.6,254)"><rect x="0" y="0" width="16.5" height="16.3" rx="2" fill="#cfe8f0"/><rect x="1" y="1" width="14.5" height="14.3" fill="#8fd0e8"/><circle cx="3.5" cy="3.5" r="2" fill="#f0d040"/><path d="M1 11 Q5 7 8.5 10 Q12 6.5 15.5 9 L15.5 15.3 L1 15.3Z" fill="#2a9a5a"/></g>
    <path d="M1049 281.5 L1053 285.5 L1049 289.5" stroke-width="1.5"/>
    <path d="M1062 279 L1068 279 L1070 281 L1079 281 L1079 291 L1062 291 Z M1062 283 L1079 283" stroke-width="1.5"/>
    <path d="M1049 304.5 L1053 308.5 L1049 312.5" stroke="#bbb" stroke-width="1.5"/>
    <path d="M1062 302 L1068 302 L1070 304 L1079 304 L1079 314 L1062 314 Z M1062 306 L1079 306" stroke="#3c3c3c" stroke-width="1.5"/>
    <!-- cursor -->
    <path d="M1069.5 194 L1069.5 210 L1073 206.5 L1076 213 L1078.5 212 L1075.5 205.5 L1080.5 205.5 Z" fill="#f4f4f4" stroke="#222" stroke-width="0.8"/>
  </svg>
</div>
<div id="bot" class="a"></div>
</body></html>
